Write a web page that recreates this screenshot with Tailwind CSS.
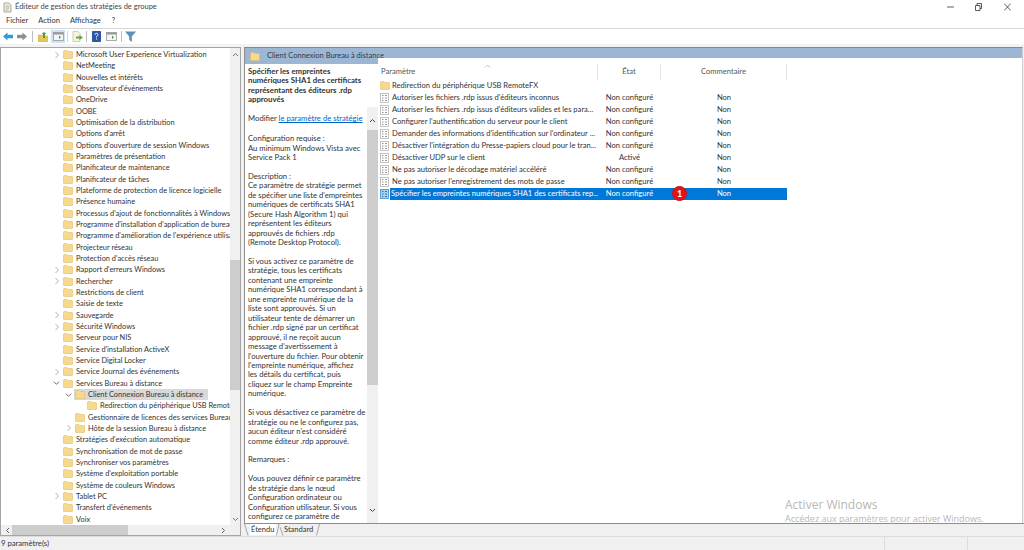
<!DOCTYPE html>
<html lang="fr">
<head>
<meta charset="UTF-8">
<title>Éditeur de gestion des stratégies de groupe</title>
<script src="https://cdn.jsdelivr.net/npm/@tailwindcss/browser@4"></script>
</head>
<body class="w-[1024px] h-[550px] overflow-hidden bg-[#f0f0f0] text-[#333] text-[7.5px] font-['Lato','Open_Sans',sans-serif] relative">
<svg width="0" height="0" class="absolute">
  <defs>
    <symbol id="folder" viewBox="0 0 10 9">
      <path d="M0.5 1.5 q0-1 1-1 h2.500 l1 1 h4 q.5 0 .5 .5 v6 q0 .5-.5 .5 h-8 q-.5 0-.5-.5z" fill="#f6d88e" stroke="#e3bd69" stroke-width=".6"/>
    </symbol>
    <symbol id="doc" viewBox="0 0 9 10">
      <rect x=".5" y=".5" width="8" height="9" fill="#fff" stroke="#a8a8a8" stroke-width=".7"/>
      <path d="M2 2.500h1.500M2 5h1.500M2 7.500h1.500M5 2.500h2M5 5h2M5 7.500h2" stroke="#666" stroke-width=".7"/>
    </symbol>
    <symbol id="docsel" viewBox="0 0 9 10">
      <rect x=".5" y=".5" width="8" height="9" fill="#a9d0ef" stroke="#3d8fcf" stroke-width=".8"/>
      <path d="M2 2.500h1.500M2 5h1.500M2 7.500h1.500M5 2.500h2M5 5h2M5 7.500h2" stroke="#1c5f96" stroke-width=".8"/>
    </symbol>
    <symbol id="more" viewBox="0 0 6 8"><path d="M1.500 1l3 3-3 3" fill="none" stroke="#a6a6a6" stroke-width=".9"/></symbol>
    <symbol id="open" viewBox="0 0 8 6"><path d="M1 1.500l3 3 3-3" fill="none" stroke="#444" stroke-width=".9"/></symbol>
  </defs>
</svg>

<div class="flex flex-col h-full">
  <!-- title + menu -->
  <div class="h-[29px] bg-white border-b border-[#d6d6d6] shrink-0">
    <div class="h-[14px] flex items-center pl-[3px]">
      <svg width="9" height="11" viewBox="0 0 9 11" class="mr-[3px]">
        <path d="M1 1h5l2 2v7H1z" fill="#f3efe2" stroke="#8a8a7a" stroke-width=".7"/>
        <path d="M2.500 4h4M2.500 6h4M2.500 8h3" stroke="#a39a80" stroke-width=".7"/>
      </svg>
      <span class="text-[#444]">Éditeur de gestion des stratégies de groupe</span>
      <div class="ml-auto flex items-center pr-[13px]">
        <svg width="7" height="8" viewBox="0 0 7 8"><path d="M0 4h7" stroke="#333" stroke-width=".8"/></svg>
        <svg width="7" height="8" viewBox="0 0 7 8" class="ml-[21px]"><path d="M.5 2.500h4.500v5H.5zM2 2.500V.5h4.500v5H5" fill="none" stroke="#333" stroke-width=".8"/></svg>
        <svg width="7" height="8" viewBox="0 0 7 8" class="ml-[22px]"><path d="M.2 .5l6.600 7M6.800 .5l-6.600 7" stroke="#333" stroke-width=".8"/></svg>
      </div>
    </div>
    <div class="h-[14px] flex items-center gap-[10px] pl-[6px]">
      <span>Fichier</span><span>Action</span><span>Affichage</span><span class="ml-[1px]">?</span>
    </div>
  </div>

  <!-- toolbar -->
  <div class="h-[15px] bg-white flex items-center pl-[3px] shrink-0">
    <svg width="10" height="9" viewBox="0 0 10 9"><path d="M0 4.500L4.500 .5v2.200H10v3.600H4.500v2.200z" fill="#2f9bd8"/></svg>
    <svg width="10" height="9" viewBox="0 0 10 9" class="ml-[4px]"><path d="M10 4.500L5.500 .5v2.200H0v3.600h5.500v2.200z" fill="#8e8e8e"/></svg>
    <div class="w-px h-[11px] bg-[#bdbdbd] ml-[5px]"></div>
    <svg width="10" height="10" viewBox="0 0 10 10" class="ml-[5px]"><path d="M0 3h4l1 1h5v6H0z" fill="#e9c65c" stroke="#c9a23c" stroke-width=".5"/><path d="M5 6V2H3.500L6 0l2.500 2H7v4z" fill="#4f9e32"/></svg>
    <div class="ml-[3px] w-[14px] h-[13px] bg-[#cfe2f3] flex items-center justify-center">
      <svg width="11" height="9" viewBox="0 0 11 9"><rect x=".5" y=".5" width="10" height="8" fill="#f4f4f4" stroke="#8a8a8a" stroke-width=".7"/><path d="M.5 .5h10v2H.5z" fill="#9a9a9a"/><path d="M6 3.500l2 1.800-2 1.800z" fill="#4f9e32"/></svg>
    </div>
    <div class="w-px h-[11px] bg-[#d4d4d4] ml-[2px]"></div>
    <svg width="11" height="11" viewBox="0 0 11 11" class="ml-[4px]"><path d="M1 .5h5l2 2v8H1z" fill="#f7f3e2" stroke="#b5ae94" stroke-width=".6"/><path d="M4 5.500h3.500V4L11 6.500 7.500 9V7.500H4z" fill="#62a93c"/></svg>
    <div class="w-px h-[11px] bg-[#bdbdbd] ml-[3px]"></div>
    <svg width="9" height="11" viewBox="0 0 9 11" class="ml-[5px]"><rect width="9" height="11" rx=".7" fill="#2f57a8"/><path d="M3 3.800q0-1.500 1.500-1.500T6 3.700Q6 4.600 4.500 5.500v1" fill="none" stroke="#fff" stroke-width=".9"/><rect x="4" y="7.500" width="1" height="1" fill="#fff"/></svg>
    <svg width="11" height="9" viewBox="0 0 11 9" class="ml-[5px]"><rect x=".5" y=".5" width="10" height="8" fill="#f4f4f4" stroke="#8a8a8a" stroke-width=".7"/><path d="M.5 .5h10v2H.5z" fill="#9a9a9a"/><path d="M6 3.500l2 1.800-2 1.800z" fill="#4f9e32"/></svg>
    <div class="w-px h-[11px] bg-[#bdbdbd] ml-[4px]"></div>
    <svg width="11" height="11" viewBox="0 0 11 11" class="ml-[3px]"><path d="M0 .5h11L6.800 5.500V11L4.200 9V5.500z" fill="#5f8fb4"/></svg>
  </div>
  <div class="h-[3px] bg-[#f3f3f3] shrink-0"></div>

  <!-- panes -->
  <div class="flex h-[489px] shrink-0">
    <!-- tree -->
    <div class="w-[241px] h-full border border-[#a5a5a5] bg-white flex flex-col shrink-0">
      <div class="flex flex-1 min-h-0">
        <div id="tree" class="flex-1 min-w-0 overflow-hidden pt-[1px] text-[7.4px]"></div>
        <!-- tree scrollbar -->
        <div class="w-[10px] bg-[#f0f0f0] flex flex-col items-center shrink-0">
          <svg width="7" height="5" viewBox="0 0 7 5" class="mt-[4px]"><path d="M1 4l2.500-2.500L6 4" fill="none" stroke="#666" stroke-width=".9"/></svg>
          <div class="w-full h-[130px] bg-[#cdcdcd] mt-[203px]"></div>
          <svg width="7" height="5" viewBox="0 0 7 5" class="mt-auto mb-[3px]"><path d="M1 1l2.500 2.500L6 1" fill="none" stroke="#666" stroke-width=".9"/></svg>
        </div>
      </div>
      <!-- tree horizontal scrollbar -->
      <div class="h-[10px] bg-[#f0f0f0] flex items-center shrink-0">
        <svg width="5" height="7" viewBox="0 0 5 7" class="ml-[4px]"><path d="M4 1L1.500 3.500 4 6" fill="none" stroke="#555" stroke-width=".9"/></svg>
        <div class="w-[116px] h-full bg-[#cdcdcd] ml-[2px]"></div>
        <svg width="5" height="7" viewBox="0 0 5 7" class="ml-auto mr-[14px]"><path d="M1 1l2.500 2.500L1 6" fill="none" stroke="#555" stroke-width=".9"/></svg>
      </div>
    </div>

    <div class="w-[3px] shrink-0"></div>

    <!-- details -->
    <div class="flex-1 min-w-0 flex flex-col">
      <div class="flex-1 min-h-0 border-l border-t border-r border-l-[#8d8d8d] border-t-[#7d8a99] border-r-[#d0d0d0] bg-white flex flex-col relative mr-[1px]">
        <div class="h-[10px] bg-[#9db6d3] shrink-0 flex items-center pl-[5px] whitespace-nowrap relative z-10">
          <svg class="w-[10px] h-[9px] mr-[7px] mt-[7px] shrink-0"><use href="#folder"/></svg>
          <span class="mt-[6px] text-[#2c3a4a]">Client Connexion Bureau à distance</span>
        </div>
        <div class="flex flex-1 min-h-0">
          <!-- description -->
          <div class="w-[133px] shrink-0 flex flex-col">
            <div class="h-[6px] bg-[#9db6d3] shrink-0"></div>
            <div class="flex flex-1 min-h-0">
              <div class="flex-1 pl-[3px] pt-[3px] whitespace-nowrap leading-[9.45px] text-[7.7px] overflow-hidden">
                <p class="font-bold text-[7.8px] mb-[9.450px]">Spécifier les empreintes<br>numériques SHA1 des certificats<br>représentant des éditeurs .rdp<br>approuvés</p>
                <p class="mb-[10.450px] mt-[3px]">Modifier <span class="text-[#0066cc] underline">le paramètre de stratégie</span></p>
                <p class="mb-[9.450px]">Configuration requise :<br>Au minimum Windows Vista avec<br>Service Pack 1</p>
                <p class="mb-[9.450px]">Description :<br>Ce paramètre de stratégie permet<br>de spécifier une liste d'empreintes<br>numériques de certificats SHA1<br>(Secure Hash Algorithm 1) qui<br>représentent les éditeurs<br>approuvés de fichiers .rdp<br>(Remote Desktop Protocol).</p>
                <p class="mb-[9.450px]">Si vous activez ce paramètre de<br>stratégie, tous les certificats<br>contenant une empreinte<br>numérique SHA1 correspondant à<br>une empreinte numérique de la<br>liste sont approuvés. Si un<br>utilisateur tente de démarrer un<br>fichier .rdp signé par un certificat<br>approuvé, il ne reçoit aucun<br>message d'avertissement à<br>l'ouverture du fichier. Pour obtenir<br>l'empreinte numérique, affichez<br>les détails du certificat, puis<br>cliquez sur le champ Empreinte<br>numérique.</p>
                <p class="mb-[9.450px]">Si vous désactivez ce paramètre de<br>stratégie ou ne le configurez pas,<br>aucun éditeur n'est considéré<br>comme éditeur .rdp approuvé.</p>
                <p class="mb-[9.450px]">Remarques :</p>
                <p>Vous pouvez définir ce paramètre<br>de stratégie dans le nœud<br>Configuration ordinateur ou<br>Configuration utilisateur. Si vous<br>configurez ce paramètre de</p>
              </div>
              <div class="w-[11px] shrink-0 flex flex-col items-center mt-[43px]">
                <div class="h-full w-full bg-[#f0f0f0] flex flex-col items-center">
                  <svg width="7" height="5" viewBox="0 0 7 5" class="mt-[11px]"><path d="M1 4l2.500-2.500L6 4" fill="none" stroke="#444" stroke-width="1"/></svg>
                  <div class="w-full h-[255px] bg-[#cdcdcd] mt-[7px]"></div>
                  <svg width="7" height="5" viewBox="0 0 7 5" class="mt-auto mb-[10px]"><path d="M1 1l2.500 2.500L6 1" fill="none" stroke="#444" stroke-width="1"/></svg>
                </div>
              </div>
            </div>
          </div>
          <!-- list -->
          <div class="w-[409px] shrink-0 bg-white relative text-[7.6px]">
            <div class="h-[22px] flex items-center text-[#555] relative">
              <svg width="7" height="4" viewBox="0 0 7 4" class="absolute left-[106px] top-[6px]"><path d="M1 3.500l2.500-2.500L6 3.500" fill="none" stroke="#b0b0b0" stroke-width=".8"/></svg>
              <div class="w-[220px] h-[16px] pl-[3px] flex items-center border-r border-[#e5e5e5] mt-[6px]">Paramètre</div>
              <div class="w-[63px] h-[16px] flex items-center justify-center border-r border-[#e5e5e5] mt-[6px]">État</div>
              <div class="w-[126px] h-[16px] flex items-center justify-center border-r border-[#e5e5e5] mt-[6px]">Commentaire</div>
            </div>
            <div id="rows"></div>
            <div class="flex h-[12px] items-center text-white relative">
              <div class="w-[220px] flex items-center pl-[2px] whitespace-nowrap"><svg class="w-[9px] h-[10px] mr-[1px] shrink-0"><use href="#docsel"/></svg><div class="bg-[#0078d7] h-[12px] flex-1 flex items-center pl-[1px]">Spécifier les empreintes numériques SHA1 des certificats rep...</div></div>
              <div class="w-[63px] h-[12px] flex items-center justify-center bg-[#0078d7]">Non configuré</div><div class="w-[126px] h-[12px] flex items-center justify-center bg-[#0078d7]">Non</div>
              <div class="absolute left-[294px] top-[-2px] w-[15px] h-[15px] rounded-full bg-[#e0141d] border border-[#c9101a] text-white font-bold text-[9px] flex items-center justify-center">1</div>
            </div>
          </div>
          <div class="flex-1 bg-white"></div>
        </div>
      </div>
      <!-- tabs -->
      <div class="h-[13px] border-t border-[#8d8d8d] bg-[#f0f0f0] flex items-start shrink-0">
        <svg width="6" height="12" viewBox="0 0 6 12" class="shrink-0"><path d="M.5 0L4 11.500" stroke="#8a8a8a" stroke-width=".7" fill="none"/></svg>
        <div class="h-[11px] leading-[11px] bg-white px-[1px] w-[26px]">Étendu</div>
        <svg width="8" height="12" viewBox="0 0 8 12" class="shrink-0"><path d="M.5 11.500L3 0M7 11.500L4 3" stroke="#8a8a8a" stroke-width=".7" fill="none"/></svg>
        <div class="h-[11px] leading-[11px] w-[32px]">Standard</div>
        <svg width="6" height="12" viewBox="0 0 6 12" class="shrink-0"><path d="M.5 11.500L3.500 0" stroke="#8a8a8a" stroke-width=".7" fill="none"/></svg>
      </div>
    </div>
  </div>

  <!-- status bar -->
  <div class="flex-1 border-t border-[#dcdcdc] bg-[#f0f0f0] flex items-center text-[7.7px]">
    <div class="w-[885px] pl-[1px] h-full flex items-center border-r border-[#dcdcdc]">9 paramètre(s)</div>
    <div class="w-[83px] h-full border-r border-[#dcdcdc]"></div>
  </div>
</div>

<!-- activation watermark -->
<div class="absolute left-[785px] top-[497px] text-[#b8b8b8] pointer-events-none whitespace-nowrap font-['Open_Sans',sans-serif]">
  <div class="text-[12px] leading-[15px]">Activer Windows</div>
  <div class="text-[9px] leading-[12px] mt-[1px]">Accédez aux paramètres pour activer Windows.</div>
</div>

<script>
  // tree rows: [label, kind]
  const ROW = 'h-[11.34px] flex items-center whitespace-nowrap';
  const FOLDER = '<svg class="w-[10px] h-[9px] mr-[3px] shrink-0"><use href="#folder"/></svg>';
  const MORE = '<svg class="w-[6px] h-[8px] mr-[3px] shrink-0"><use href="#more"/></svg>';
  const OPEN = '<svg class="w-[7px] h-[6px] mr-[3px] shrink-0"><use href="#open"/></svg>';

  const treeItems = [
    ['Microsoft User Experience Virtualization', 'more'],
    ['NetMeeting'], ['Nouvelles et intérêts'], ["Observateur d'événements"], ['OneDrive'], ['OOBE'],
    ['Optimisation de la distribution'], ["Options d'arrêt"], ["Options d'ouverture de session Windows"],
    ['Paramètres de présentation'], ['Planificateur de maintenance'], ['Planificateur de tâches'],
    ['Plateforme de protection de licence logicielle'], ['Présence humaine'],
    ["Processus d'ajout de fonctionnalités à Windows 10"],
    ["Programme d'installation d'application de bureau"],
    ["Programme d'amélioration de l'expérience utilisateur"],
    ['Projecteur réseau'], ["Protection d'accès réseau"],
    ["Rapport d'erreurs Windows", 'more'], ['Rechercher', 'more'], ['Restrictions de client'], ['Saisie de texte'],
    ['Sauvegarde', 'more'], ['Sécurité Windows', 'more'], ['Serveur pour NIS'],
    ["Service d'installation ActiveX"], ['Service Digital Locker'],
    ['Service Journal des événements', 'more'], ['Services Bureau à distance', 'open'],
    ['Client Connexion Bureau à distance', 'selected'],
    ['Redirection du périphérique USB RemoteFX', 'sub2'],
    ['Gestionnaire de licences des services Bureau à distance', 'sub1'],
    ['Hôte de la session Bureau à distance', 'sub1more'],
    ["Stratégies d'exécution automatique"], ['Synchronisation de mot de passe'], ['Synchroniser vos paramètres'],
    ["Système d'exploitation portable"], ['Système de couleurs Windows'], ['Tablet PC', 'more'],
    ["Transfert d'événements"], ['Voix'],
  ];

  function treeRow([label, kind]) {
    switch (kind) {
      case 'more': return `<div class="${ROW} pl-[53px]">${MORE}${FOLDER}${label}</div>`;
      case 'open': return `<div class="${ROW} pl-[52px]">${OPEN}${FOLDER}${label}</div>`;
      case 'selected': return `<div class="${ROW} pl-[64px]"><svg class="w-[7px] h-[6px] mr-[2px] shrink-0"><use href="#open"/></svg><div class="flex items-center bg-[#d9d9d9] w-[134px] h-full pl-[1px]">${FOLDER}${label}</div></div>`;
      case 'sub2': return `<div class="${ROW} pl-[86px]">${FOLDER}${label}</div>`;
      case 'sub1': return `<div class="${ROW} pl-[74px]">${FOLDER}${label}</div>`;
      case 'sub1more': return `<div class="${ROW} pl-[65px]">${MORE}${FOLDER}${label}</div>`;
      default: return `<div class="${ROW} pl-[62px]">${FOLDER}${label}</div>`;
    }
  }
  document.getElementById('tree').innerHTML = treeItems.map(treeRow).join('');

  // list rows above the selected one
  const listItems = [
    ["Autoriser les fichiers .rdp issus d'éditeurs inconnus", 'Non configuré'],
    ["Autoriser les fichiers .rdp issus d'éditeurs valides et les para...", 'Non configuré'],
    ["Configurer l'authentification du serveur pour le client", 'Non configuré'],
    ["Demander des informations d'identification sur l'ordinateur ...", 'Non configuré'],
    ["Désactiver l'intégration du Presse-papiers cloud pour le tran...", 'Non configuré'],
    ['Désactiver UDP sur le client', 'Activé'],
    ['Ne pas autoriser le décodage matériel accéléré', 'Non configuré'],
    ["Ne pas autoriser l'enregistrement des mots de passe", 'Non configuré'],
  ];
  document.getElementById('rows').innerHTML =
    '<div class="flex h-[12px] items-center"><div class="w-[220px] flex items-center pl-[2px] whitespace-nowrap"><svg class="w-[10px] h-[9px] mr-[2px] shrink-0"><use href="#folder"/></svg>Redirection du périphérique USB RemoteFX</div></div>' +
    listItems.map(([name, state]) => `
      <div class="flex h-[12px] items-center">
        <div class="w-[220px] flex items-center pl-[2px] whitespace-nowrap"><svg class="w-[9px] h-[10px] mr-[3px] shrink-0"><use href="#doc"/></svg>${name}</div>
        <div class="w-[63px] text-center">${state}</div><div class="w-[126px] text-center">Non</div>
      </div>`).join('');
</script>
</body>
</html>
